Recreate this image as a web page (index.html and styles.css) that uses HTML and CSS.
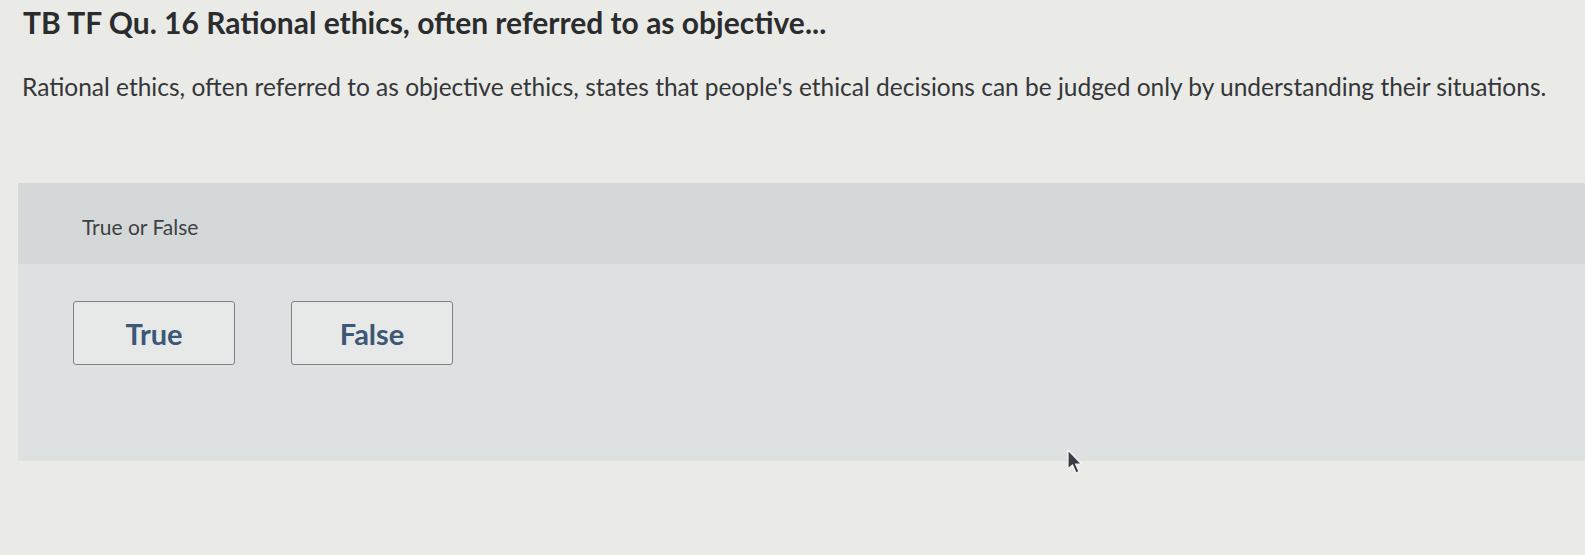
FILE: index.html
```html
<!DOCTYPE html>
<html lang="en">
<head>
<meta charset="utf-8">
<title>TB TF Qu. 16</title>
<link rel="stylesheet" href="styles.css">
</head>
<body>
<div class="page">
  <h1 class="title">TB TF Qu. 16 Rational ethics, often referred to as objective...</h1>
  <p class="prompt">Rational ethics, often referred to as objective ethics, states that people's ethical decisions can be judged only by understanding their situations.</p>
  <section class="panel">
    <div class="panel-head">True or False</div>
    <div class="panel-body">
      <button class="choice" type="button">True</button>
      <button class="choice" type="button">False</button>
    </div>
  </section>
</div>
<svg class="cursor" width="18" height="28" viewBox="0 0 18 28" aria-hidden="true">
  <path d="M2 1 L2 20 L6.5 16 L10 24 L13 22.6 L9.6 15 L15.5 15 Z" fill="#3a3d42" stroke="#f4f4f4" stroke-width="1.2" stroke-linejoin="round"/>
</svg>
</body>
</html>
```
FILE: styles.css
```css
html, body {
  margin: 0;
  padding: 0;
}
body {
  background: #eaeae7;
  font-family: Lato, "Open Sans", "Liberation Sans", sans-serif;
  width: 1585px;
  height: 555px;
  overflow: hidden;
  position: relative;
}
.page {
  padding: 4px 0 0 18px;
}
.title {
  margin: 0 0 0 5px;
  font-size: 30px;
  font-weight: 700;
  color: #2b2c2e;
  line-height: 36px;
}
.prompt {
  margin: 32px 0 0 4px;
  font-size: 24.5px;
  font-weight: 400;
  color: #34363a;
  line-height: 30px;
}
.panel {
  margin-top: 81px;
  background: #dde1e2;
  height: 278px;
}
.panel-head {
  background: #d4d8d9;
  height: 81px;
  display: flex;
  align-items: center;
  padding-left: 64px;
  font-size: 21px;
  color: #3e4144;
  box-sizing: border-box;
  padding-top: 6px;
}
.panel-body {
  display: flex;
  gap: 56px;
  padding: 37px 0 0 55px;
}
.choice {
  width: 162px;
  height: 64px;
  border: 1.5px solid #7d8084;
  border-radius: 3px;
  background: #e7e9e9;
  font-family: inherit;
  font-size: 29px;
  font-weight: 700;
  color: #3d5877;
  padding: 0;
  cursor: pointer;
}
.cursor {
  position: absolute;
  left: 1066px;
  top: 449px;
}
```
